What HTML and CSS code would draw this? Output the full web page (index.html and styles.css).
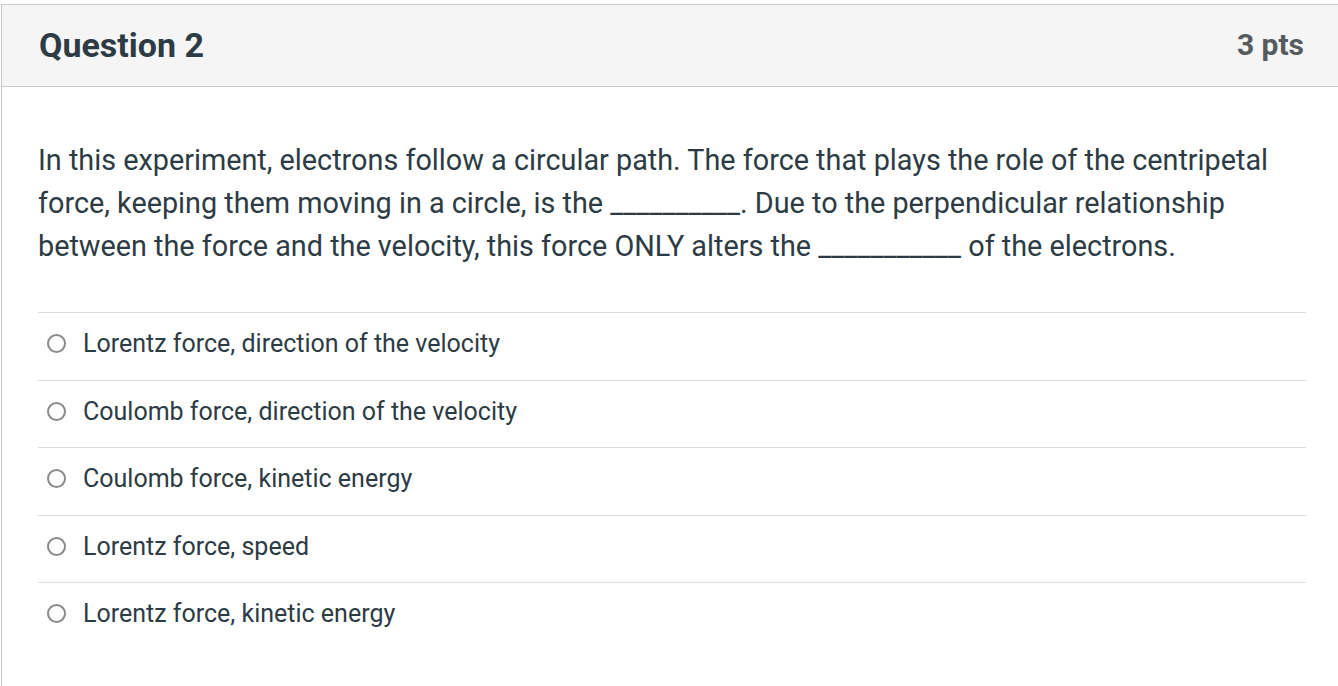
FILE: index.html
```html
<!DOCTYPE html>
<html lang="en">
<head>
<meta charset="utf-8">
<title>Question 2</title>
<link rel="stylesheet" href="styles.css">
</head>
<body>
<div class="question">
  <div class="header">
    <h2 class="title">Question 2</h2>
    <span class="points">3 pts</span>
  </div>
  <div class="content">
    <p class="text">In this experiment, electrons follow a circular path. The force that plays the role of the centripetal force, keeping them moving in a circle, is the __________. Due to the perpendicular relationship between the force and the velocity, this force ONLY alters the ___________ of the electrons.</p>
    <div class="answers">
      <label class="answer"><span class="radio"></span><span class="label">Lorentz force, direction of the velocity</span></label>
      <label class="answer"><span class="radio"></span><span class="label">Coulomb force, direction of the velocity</span></label>
      <label class="answer"><span class="radio"></span><span class="label">Coulomb force, kinetic energy</span></label>
      <label class="answer"><span class="radio"></span><span class="label">Lorentz force, speed</span></label>
      <label class="answer"><span class="radio"></span><span class="label">Lorentz force, kinetic energy</span></label>
    </div>
  </div>
</div>
</body>
</html>
```

FILE: styles.css
```css
html, body {
  margin: 0;
  padding: 0;
  background: #ffffff;
  overflow: hidden;
}
body {
  font-family: Roboto, "Liberation Sans", sans-serif;
  color: #2d3b45;
}
.question {
  box-sizing: border-box;
  width: 1340px;
  margin: 4px 0 0 1px;
  border: 1px solid #c7c7c7;
  min-height: 700px;
}
.header {
  box-sizing: border-box;
  height: 82px;
  background: #f5f5f5;
  border-bottom: 1px solid #c7c7c7;
  display: flex;
  align-items: center;
  justify-content: space-between;
  padding: 0 36px 2px 37px;
}
.title {
  margin: 0;
  font-size: 34px;
  font-weight: 700;
  color: #2d3b45;
}
.points {
  font-size: 30px;
  font-weight: 700;
  color: #555b5f;
}
.content {
  padding: 52px 34px 0 36px;
}
.text {
  margin: 0 0 44px 0;
  font-size: 28.8px;
  line-height: 43px;
}
.answers {
  display: flex;
  flex-direction: column;
}
.answer {
  display: flex;
  align-items: center;
  gap: 17px;
  height: 67.5px;
  box-sizing: border-box;
  border-top: 1px solid #dcdcdc;
  padding: 0 0 5px 9px;
  font-size: 25px;
}
.radio {
  box-sizing: border-box;
  width: 19px;
  height: 19px;
  border: 2px solid #8b8b8b;
  border-radius: 50%;
  flex: none;
}
```
